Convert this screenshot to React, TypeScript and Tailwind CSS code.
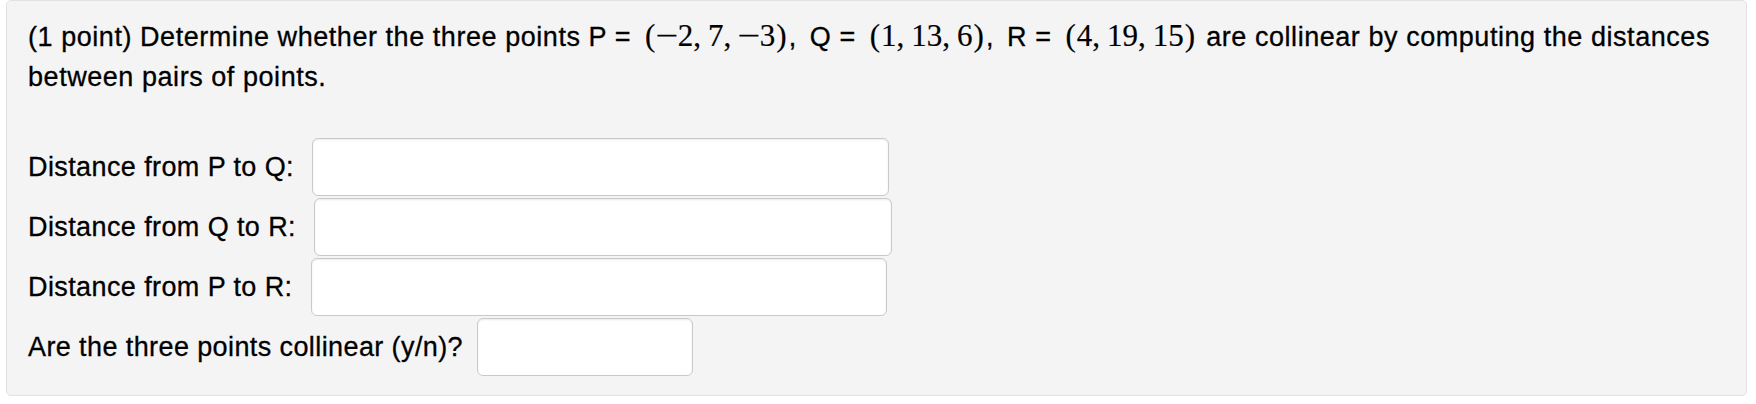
const rows = [
  { label: 'Distance from P to Q:', width: 'w-[577px]', gap: 'ml-[18px]' },
  { label: 'Distance from Q to R:', width: 'w-[578px]', gap: 'ml-[18px]' },
  { label: 'Distance from P to R:', width: 'w-[576px]', gap: 'ml-[18px]' },
  { label: 'Are the three points collinear (y/n)?', width: 'w-[216px]', gap: 'ml-[14px]' },
];

// math tuple, spaced roughly like MathJax's TeX fonts
const Tuple = ({ values, last }: { values: string[]; last?: boolean }) => (
  <span
    className={`ml-[5px] ${last ? 'mr-[10px]' : 'mr-[1px]'} font-['Liberation_Serif','Times_New_Roman',serif] text-[31px] leading-none tracking-normal [-webkit-text-stroke:0.2px_#000]`}
  >
    <span className="px-[1px]">(</span>
    {values.map((v, i) => (
      <span key={i}>
        {v.startsWith('−') ? (
          <>
            <span className="mx-[2px] inline-block scale-x-[1.3]">−</span>
            {v.slice(1)}
          </>
        ) : (
          v
        )}
        {i < values.length - 1 && <span className="mr-[7px]">,</span>}
      </span>
    ))}
    <span className="px-[1px]">)</span>
  </span>
);

const App = () => {
  return (
    <div className="min-h-screen bg-white">
      <div className="ml-[6px] w-[1741px] rounded-[5px] border border-[#e2e2e2] bg-[#f4f4f4] px-[21px] pt-[16px] pb-[19px] font-['Liberation_Sans',Arial,sans-serif] text-[27px] text-black [-webkit-text-stroke:0.3px_#000]">
        <p className="leading-[40px] tracking-[0.55px]">
          <span className="whitespace-nowrap">
            (1 point) Determine whether the three points P = <Tuple values={['−2', '7', '−3']} />,{' '}
            <span className="ml-[5px]">Q</span> = <Tuple values={['1', '13', '6']} />, <span className="ml-[5px]">R</span> ={' '}
            <Tuple values={['4', '19', '15']} last />
            are collinear by computing the distances
          </span>
          <br />
          between pairs of points.
        </p>

        <div className="mt-[41px] flex flex-col gap-[2px] tracking-[0.4px]">
          {rows.map((row) => (
            <div key={row.label} className="flex items-center">
              <span className="whitespace-nowrap">{row.label}</span>
              <input
                type="text"
                className={`${row.gap} h-[58px] ${row.width} rounded-[6px] border-[1.5px] border-[#c9c9c9] bg-white shadow-[inset_0_1px_2px_rgba(0,0,0,0.08)] outline-none`}
              />
            </div>
          ))}
        </div>
      </div>
    </div>
  );
};

export default App;
